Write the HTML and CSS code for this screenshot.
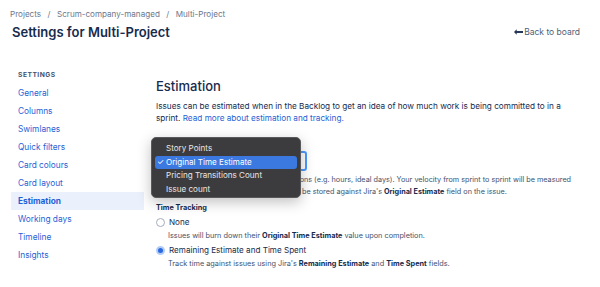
FILE: index.html
```html
<!DOCTYPE html>
<html>
<head>
<meta charset="utf-8">
<link rel="stylesheet" href="styles.css">
</head>
<body>
<header class="top">
  <nav class="crumbs">
    <span>Projects</span><span class="sep">/</span><span>Scrum-company-managed</span><span class="sep">/</span><span>Multi-Project</span>
  </nav>
  <div class="title-row">
    <h1>Settings for Multi-Project</h1>
    <a class="back"><svg class="back-ico" viewBox="0 0 10 6" width="9" height="6"><path d="M0 3 L3 0 L3 2 L10 2 L10 4 L3 4 L3 6 Z" fill="#253858"/></svg>Back to board</a>
  </div>
</header>
<div class="layout">
  <aside class="side">
    <div class="side-head">SETTINGS</div>
    <ul class="side-list">
      <li>General</li>
      <li>Columns</li>
      <li>Swimlanes</li>
      <li>Quick filters</li>
      <li>Card colours</li>
      <li>Card layout</li>
      <li class="active">Estimation</li>
      <li>Working days</li>
      <li>Timeline</li>
      <li>Insights</li>
    </ul>
  </aside>
  <main class="main">
    <h2>Estimation</h2>
    <p class="intro">Issues can be estimated when in the Backlog to get an idea of how much work is being committed to in a sprint. <a class="link">Read more about estimation and tracking.</a></p>
    <div class="field">
      <div class="field-label">Estimation Statistic</div>
      <div class="select"><span>Original Time Estimate</span><span class="chev">&#8964;</span></div>
      <p class="help">Estimate issues using time-based estimati<span>ons (e.g. hours, ideal days). Your velocity from sprint to sprint will be measured</span><br>against these estimates. This estimate will <span>be stored against Jira's <b>Original Estimate</b> field on the issue.</span></p>
    </div>
    <div class="tt">
      <div class="tt-label">Time Tracking</div>
      <div class="radio-row"><span class="radio"></span><span>None</span></div>
      <p class="radio-desc">Issues will burn down their <b>Original Time Estimate</b> value upon completion.</p>
      <div class="radio-row"><span class="radio on"></span><span>Remaining Estimate and Time Spent</span></div>
      <p class="radio-desc">Track time against issues using Jira's <b>Remaining Estimate</b> and <b>Time Spent</b> fields.</p>
    </div>
  </main>
</div>
<div class="menu">
  <div class="menu-item">Story Points</div>
  <div class="menu-item sel"><span class="check">&#10003;</span>Original Time Estimate</div>
  <div class="menu-item">Pricing Transitions Count</div>
  <div class="menu-item">Issue count</div>
</div>
</body>
</html>
```
FILE: styles.css
```css
* { box-sizing: border-box; }
html, body { margin: 0; padding: 0; }
body {
  width: 600px;
  height: 287px;
  overflow: hidden;
  position: relative;
  background: #fff;
  color: #172b4d;
  font-family: Inter, "Noto Sans", sans-serif;
}
.top { padding: 8px 20px 0 10px; }
.crumbs {
  display: flex;
  gap: 6.5px;
  font-size: 8.1px;
  line-height: 12px;
  color: #6b778c;
}
.title-row {
  display: flex;
  justify-content: space-between;
  align-items: center;
  margin-top: 3px;
}
h1 {
  margin: 0;
  padding-left: 2px;
  font-size: 13px;
  line-height: 18px;
  font-weight: 600;
  color: #172b4d;
}
.back {
  display: flex;
  align-items: center;
  gap: 1px;
  font-size: 8.5px;
  color: #505f79;
}
.layout {
  display: flex;
  margin-top: 21px;
}
.side {
  margin-left: 11px;
  width: 133px;
  padding-top: 6px;
}
.side-head {
  padding-left: 7px;
  font-size: 6.7px;
  font-weight: 700;
  letter-spacing: 0.5px;
  line-height: 14px;
  color: #42526e;
}
.side-list { list-style: none; margin: 2px 0 0; padding: 0; }
.side-list li {
  height: 18px;
  line-height: 18px;
  padding-left: 7px;
  font-size: 8.3px;
  color: #1f5fd6;
}
.side-list li.active {
  background: #eaf1fd;
  font-weight: 700;
}
.main {
  margin-left: 12px;
  padding-top: 16px;
  width: 425px;
}
h2 {
  margin: 0;
  font-size: 13px;
  line-height: 16px;
  font-weight: 500;
  color: #172b4d;
}
.intro {
  margin: 6px 0 0;
  font-size: 8.2px;
  line-height: 12px;
  color: #172b4d;
}
.link { color: #1f5fd6; }
.field { margin-top: 14px; }
.field-label {
  font-size: 7.3px;
  line-height: 10px;
  font-weight: 700;
  color: #42526e;
}
.select {
  margin-top: 3px;
  width: 151px;
  height: 20px;
  border: 2px solid #4c9aff;
  border-radius: 3px;
  display: flex;
  align-items: center;
  justify-content: space-between;
  padding: 0 4px;
  font-size: 8.2px;
  color: #172b4d;
}
.chev { font-size: 8px; color: #505f79; line-height: 8px; margin-top: -4px; }
.help {
  margin: 3px 0 0;
  font-size: 7.25px;
  line-height: 12px;
  color: #42526e;
  white-space: nowrap;
}
.help b { color: #172b4d; }
.tt { margin-top: 4px; }
.tt-label {
  font-size: 7.3px;
  line-height: 12px;
  font-weight: 700;
  color: #172b4d;
}
.radio-row {
  display: flex;
  align-items: center;
  gap: 4px;
  height: 14px;
  margin-top: 1px;
  font-size: 8.1px;
  color: #172b4d;
}
.radio {
  width: 9px;
  height: 9px;
  border: 1px solid #a5adba;
  border-radius: 50%;
  background: #fff;
}
.radio.on {
  border: 2px solid #b3cdf7;
  background: #2a68e0;
}
.radio-desc {
  margin: 1px 0 0 12px;
  font-size: 7.3px;
  line-height: 12px;
  color: #42526e;
}
.radio-desc b { color: #172b4d; }
.menu {
  position: absolute;
  left: 151px;
  top: 137px;
  width: 150px;
  height: 61px;
  padding: 4px 3px;
  background: #3c3c3e;
  border: 1px solid #59595c;
  border-radius: 5px;
  box-shadow: 0 4px 14px rgba(0,0,0,0.25);
}
.menu-item {
  position: relative;
  height: 13.5px;
  line-height: 13.5px;
  padding-left: 11px;
  font-size: 8.1px;
  color: #e6e6e6;
  border-radius: 3px;
}
.menu-item.sel { background: #3b78e0; color: #fff; }
.check { position: absolute; left: 2px; top: 0; font-size: 8px; }
```
